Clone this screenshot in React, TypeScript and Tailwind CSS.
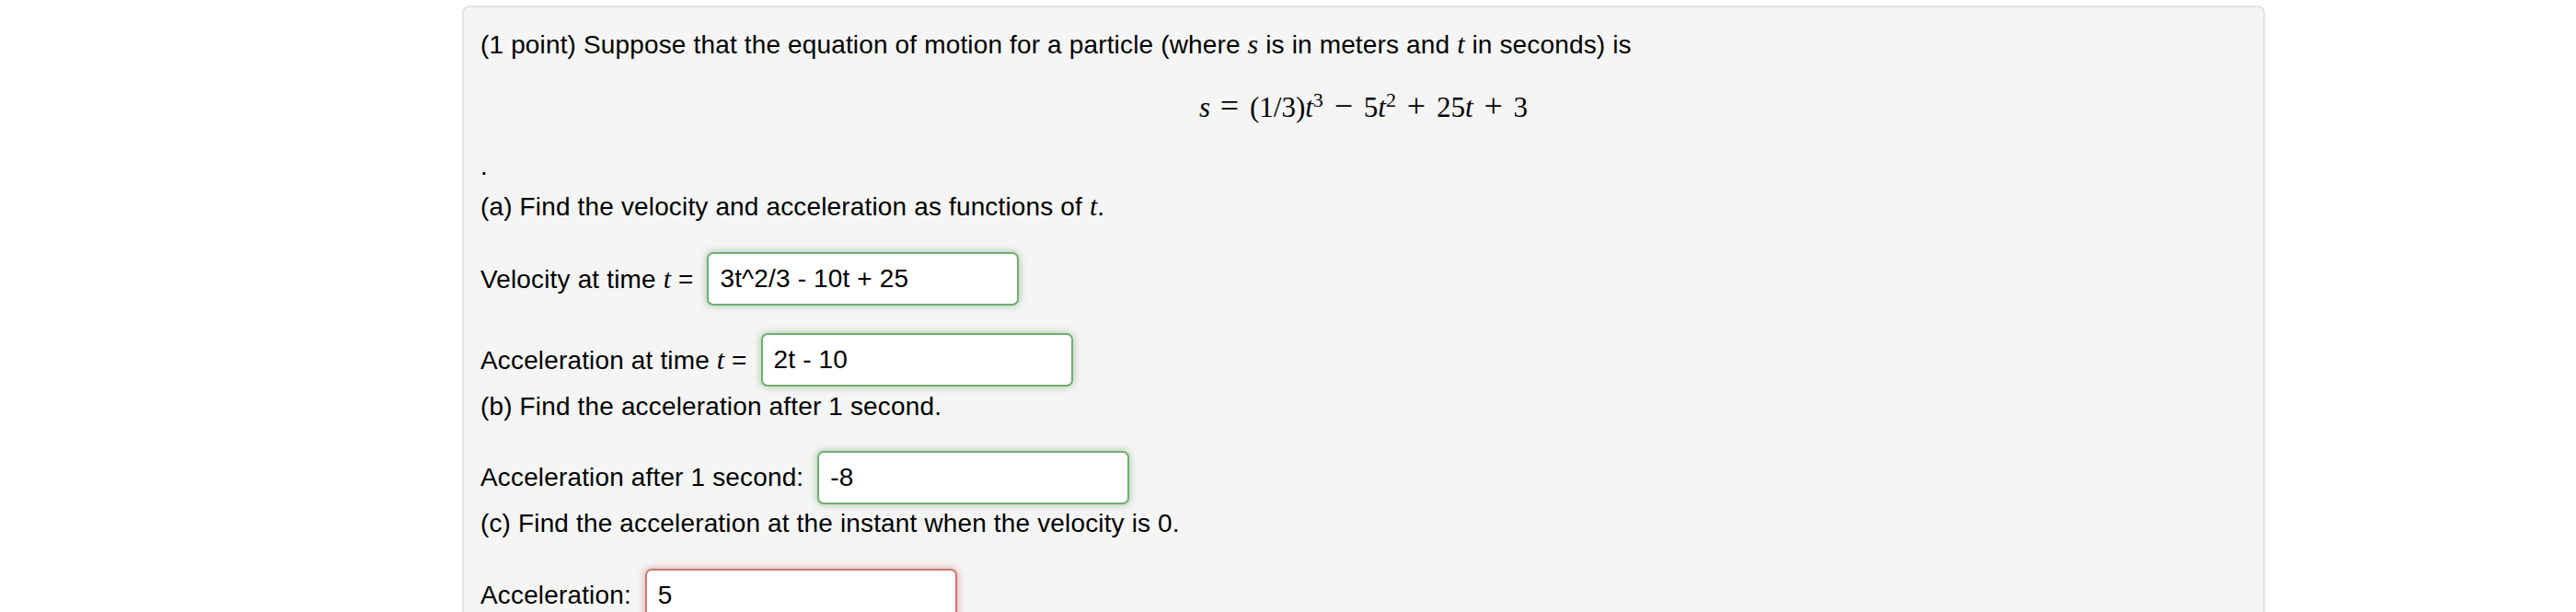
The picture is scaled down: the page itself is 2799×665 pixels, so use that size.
import React from 'react'

// inline math variable, rendered like MathJax's italic serif
function M({ children }: { children: React.ReactNode }) {
  return <i className="font-['Liberation_Serif',serif] text-[30px] tracking-normal">{children}</i>
}

function Sup({ children }: { children: React.ReactNode }) {
  return <span className="align-[11px] text-[22px] leading-none">{children}</span>
}

function Op({ children }: { children: React.ReactNode }) {
  return <span className="mx-[11px] inline-block w-[22px] text-center text-[36px] leading-none">{children}</span>
}

function Answer({ value, wrong }: { value: string; wrong?: boolean }) {
  return (
    <input
      readOnly
      value={value}
      className={
        wrong
          ? 'h-[58px] w-[339px] rounded-[7px] border-2 border-[#d27474] bg-white px-[12px] text-[28px] tracking-[0.15px] text-black outline-none shadow-[0_0_8px_rgba(191,84,84,0.55)]'
          : 'h-[58px] w-[339px] rounded-[7px] border-2 border-[#72ad72] bg-white px-[12px] text-[28px] tracking-[0.15px] text-black outline-none shadow-[0_0_8px_rgba(81,153,81,0.55)]'
      }
    />
  )
}

function Row({ label, value, wrong, className }: { label: React.ReactNode; value: string; wrong?: boolean; className: string }) {
  return (
    <div className={`flex h-[58px] items-center gap-[15px] ${className}`}>
      <span>{label}</span>
      <Answer value={value} wrong={wrong} />
    </div>
  )
}

export default function App() {
  return (
    <div className="min-h-screen bg-white pt-[6px]">
      <div className="ml-[502px] w-[1959px] rounded-lg border-2 border-[#e3e3e3] bg-[#f5f5f5] px-[18px] pt-[22px] pb-[40px] font-['Liberation_Sans',Arial,sans-serif] text-[28px] leading-[36px] tracking-[0.15px] text-black">
        <p>
          (1 point) Suppose that the equation of motion for a particle (where <M>s</M> is in meters and <M>t</M> in
          seconds) is
        </p>

        {/* display equation */}
        <div className="mt-[30px] text-center font-['Liberation_Serif',serif] text-[31px] leading-[40px] tracking-normal">
          <i className="-mr-[1px]">s</i>
          <Op>=</Op>
          (1/3)<i>t</i>
          <Sup>3</Sup>
          <Op>−</Op>5<i>t</i>
          <Sup>2</Sup>
          <Op>+</Op>25<i>t</i>
          <Op>+</Op>3
        </div>

        <p className="mt-[26px]">.</p>

        <p className="mt-[7px]">
          (a) Find the velocity and acceleration as functions of <M>t</M>.
        </p>

        <Row className="mt-[31px]" label={<>Velocity at time <M>t</M> =</>} value="3t^2/3 - 10t + 25" />
        <Row className="mt-[30px]" label={<>Acceleration at time <M>t</M> =</>} value="2t - 10" />

        <p className="mt-[4px]">(b) Find the acceleration after 1 second.</p>

        <Row className="mt-[30px]" label="Acceleration after 1 second:" value="-8" />

        <p className="mt-[3px]">(c) Find the acceleration at the instant when the velocity is 0.</p>

        <Row className="mt-[31px]" label="Acceleration:" value="5" wrong />
      </div>
    </div>
  )
}
